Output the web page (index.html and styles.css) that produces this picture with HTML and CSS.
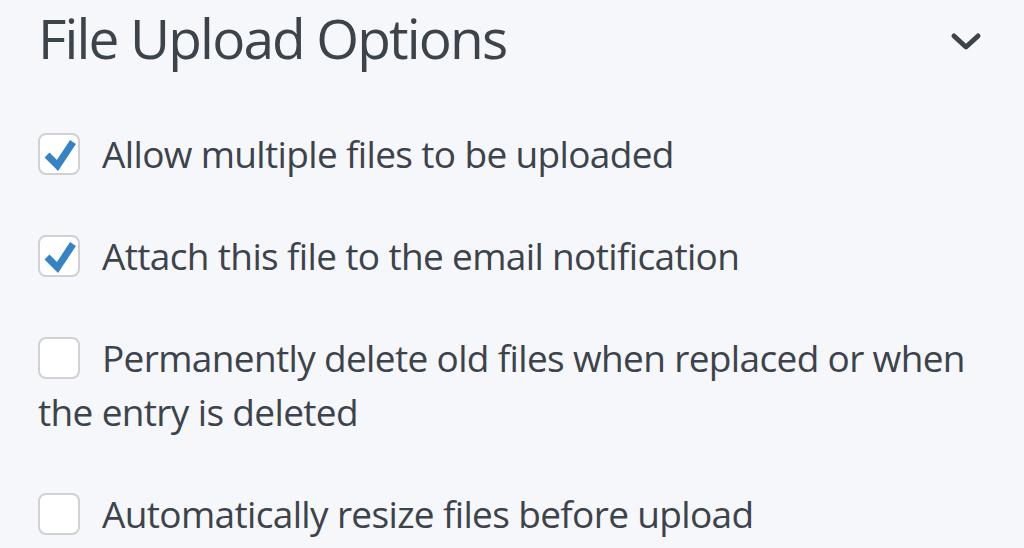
FILE: index.html
```html
<!DOCTYPE html>
<html lang="en">
<head>
<meta charset="utf-8">
<title>File Upload Options</title>
<link rel="stylesheet" href="styles.css">
</head>
<body>
<section class="panel">
  <header class="panel-head">
    <h2 class="panel-title">File Upload Options</h2>
    <button class="toggle" aria-label="Collapse">
      <svg viewBox="0 0 32 20" width="32" height="20"><path d="M4 4 L16 15 L28 4" fill="none" stroke="#3c434a" stroke-width="5" stroke-linecap="round" stroke-linejoin="round"/></svg>
    </button>
  </header>
  <div class="options">
    <label class="option"><span class="box checked"><svg viewBox="0 0 42 42" width="42" height="42"><path d="M9 22 L19.5 32.5 L35 9" fill="none" stroke="#3582c4" stroke-width="7" stroke-linejoin="miter"/></svg></span><span class="text">Allow multiple files to be uploaded</span></label>
    <label class="option"><span class="box checked"><svg viewBox="0 0 42 42" width="42" height="42"><path d="M9 22 L19.5 32.5 L35 9" fill="none" stroke="#3582c4" stroke-width="7" stroke-linejoin="miter"/></svg></span><span class="text">Attach this file to the email notification</span></label>
    <label class="option"><span class="box"></span><span class="text">Permanently delete old files when replaced or when the entry is deleted</span></label>
    <label class="option"><span class="box"></span><span class="text">Automatically resize files before upload</span></label>
  </div>
</section>
</body>
</html>
```

FILE: styles.css
```css
html, body {
  margin: 0;
  padding: 0;
  background: #f6f7fb;
}
body {
  font-family: "Open Sans", "Noto Sans", sans-serif;
  color: #3c434a;
  width: 1024px;
  height: 548px;
  overflow: hidden;
}
.panel {
  padding: 0 38px;
}
.panel-head {
  display: flex;
  justify-content: space-between;
  align-items: flex-start;
}
.panel-title {
  margin: 0;
  font-size: 55px;
  font-weight: 400;
  line-height: 76px;
  letter-spacing: -1.85px;
  color: #3c434a;
}
.toggle {
  margin: 32px 4px 0 0;
  padding: 0;
  border: 0;
  background: none;
  width: 32px;
  height: 20px;
  display: block;
}
.toggle svg {
  display: block;
}
.options {
  margin-top: 51px;
  display: flex;
  flex-direction: column;
  gap: 48px;
}
.option {
  display: block;
  font-size: 37px;
  line-height: 54px;
  letter-spacing: -0.65px;
}
.box {
  display: inline-block;
  box-sizing: border-box;
  width: 42px;
  height: 42px;
  margin-right: 22px;
  background: #fff;
  border: 2px solid #d0d1d5;
  border-radius: 8px;
  vertical-align: -7px;
  position: relative;
}
.box svg {
  position: absolute;
  left: -2px;
  top: -2px;
  display: block;
}
```
